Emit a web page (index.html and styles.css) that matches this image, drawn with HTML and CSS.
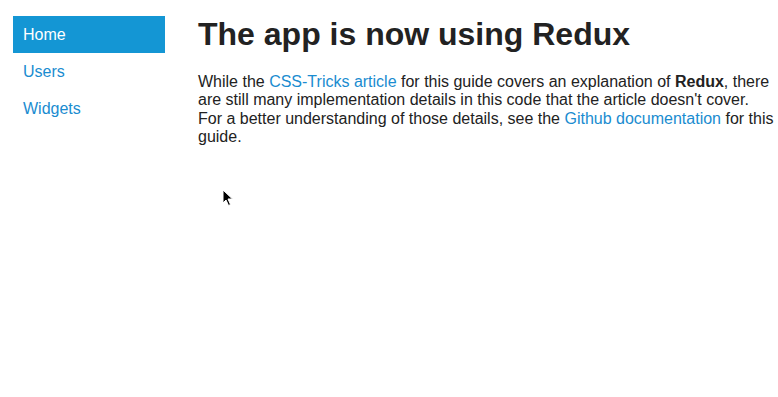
FILE: index.html
```html
<!DOCTYPE html>
<html>
<head>
<meta charset="utf-8">
<link rel="stylesheet" href="styles.css">
</head>
<body>
<div class="app">
  <nav class="sidebar">
    <a class="nav-item active" href="#">Home</a>
    <a class="nav-item" href="#">Users</a>
    <a class="nav-item" href="#">Widgets</a>
  </nav>
  <main class="content">
    <h1 class="title">The app is now using Redux</h1>
    <p class="text">While the <a class="link" href="#">CSS-Tricks article</a> for this guide covers an explanation of <strong>Redux</strong>, there are still many implementation details in this code that the article doesn't cover. For a better understanding of those details, see the <a class="link" href="#">Github documentation</a> for this guide.</p>
  </main>
</div>
<svg class="cursor" width="12" height="18" viewBox="0 0 12 18">
  <path d="M1 1 L1 14 L4 11 L6.5 16.5 L8.5 15.5 L6 10 L10.5 10 Z" fill="#000" stroke="#fff" stroke-width="1"/>
</svg>
</body>
</html>
```
FILE: styles.css
```css
html, body {
  margin: 0;
  padding: 0;
  background: #fff;
}
body {
  font-family: "Liberation Sans", Arial, sans-serif;
  font-size: 16px;
  color: #222;
}
.app {
  display: flex;
  padding: 16px 0 0 13px;
}
.sidebar {
  width: 152px;
  flex: none;
  display: flex;
  flex-direction: column;
}
.nav-item {
  display: block;
  padding: 9px 10px;
  color: #1a8cd0;
  text-decoration: none;
  line-height: 19px;
}
.nav-item.active {
  background: #1496d4;
  color: #fff;
}
.content {
  flex: 1;
  margin-left: 33px;
  margin-right: 1px;
}
.title {
  margin: 0 0 20px;
  font-size: 32px;
  font-weight: bold;
  line-height: 37px;
  color: #222;
}
.text {
  margin: 0;
  line-height: 18.4px;
}
.link {
  color: #1a8cd0;
  text-decoration: none;
}
.cursor {
  position: absolute;
  left: 222px;
  top: 189px;
}
```
